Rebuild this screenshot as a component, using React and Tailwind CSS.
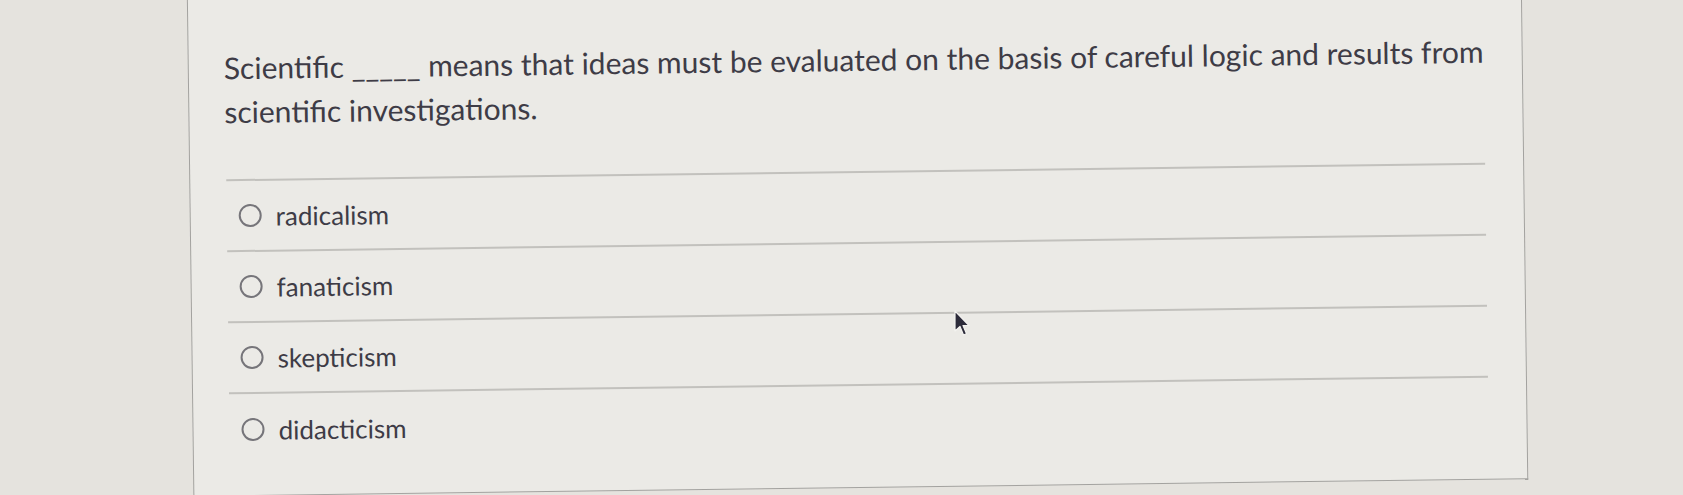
import React from 'react'

const options = ['radicalism', 'fanaticism', 'skepticism', 'didacticism']

function Radio() {
  return <span className="block w-[23px] h-[23px] rounded-full border-2 border-[#76757a] shrink-0" />
}

function Cursor() {
  return (
    <svg className="absolute left-[952px] top-[309px]" width="20" height="30" viewBox="0 0 20 30">
      <path d="M3 2 L3 22 L8 17.5 L11.5 26 L14.5 24.8 L11 16.5 L17 16.5 Z" fill="#2c2b3a" stroke="#f4f3f0" strokeWidth="1.2" strokeLinejoin="round" />
    </svg>
  )
}

export default function App() {
  return (
    <div
      className="relative w-[1683px] h-[495px] overflow-hidden bg-[#e5e3de]"
      style={{ fontFamily: 'Lato, "Open Sans", sans-serif' }}
    >
      <div className="pl-[190px] -mt-[20px]">
        <div className="w-[1335px] h-[508px] bg-[#ebeae6] border border-t-0 border-[#a3a29f] rotate-[-0.75deg] pt-[57px] pl-[35px] pr-[26px]">
          <p className="text-[30px] leading-[44px] text-[#3e3c46]">
            Scientific _____ means that ideas must be evaluated on the basis of careful logic and results from scientific investigations.
          </p>

          <div className="mt-[46px] mr-[12px] border-t-2 border-[#c2c1bd] ml-[1px]">
            {options.map((o, i) => (
              <div
                key={o}
                className={
                  'h-[71px] flex items-center gap-[14px] pl-[12px] ' +
                  (i < options.length - 1 ? 'border-b-2 border-[#c2c1bd]' : '')
                }
              >
                <Radio />
                <span className="text-[26px] leading-none text-[#3e3c46]">{o}</span>
              </div>
            ))}
          </div>
        </div>
      </div>
      <Cursor />
    </div>
  )
}
